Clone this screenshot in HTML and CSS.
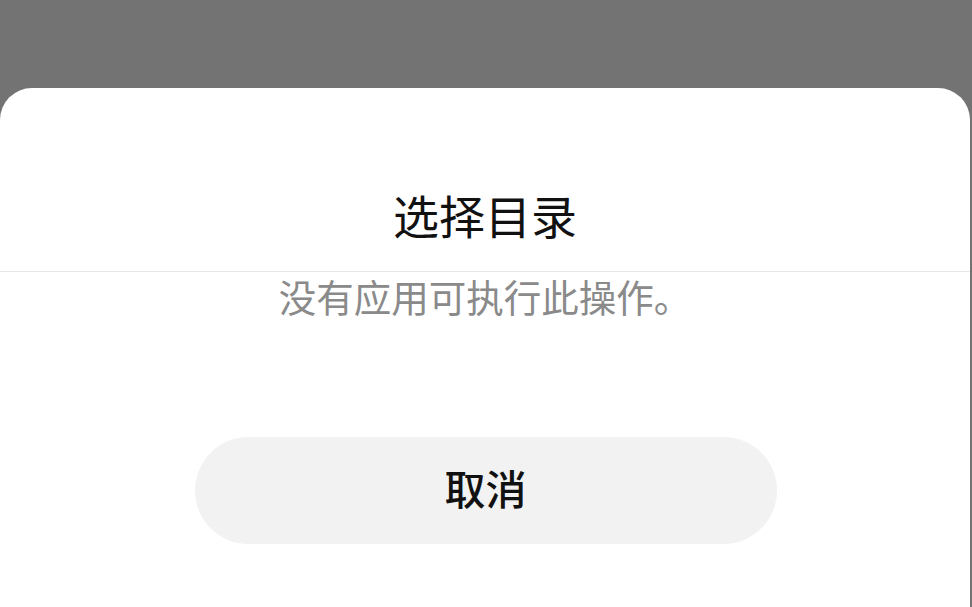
FILE: index.html
```html
<!DOCTYPE html>
<html lang="zh">
<head>
<meta charset="utf-8">
<link rel="stylesheet" href="styles.css">
</head>
<body>
<div class="sheet">
  <div class="header">
    <h1 class="title">选择目录</h1>
  </div>
  <p class="message">没有应用可执行此操作。</p>
  <div class="actions">
    <button class="cancel">取消</button>
  </div>
</div>
</body>
</html>
```

FILE: styles.css
```css
html, body {
  margin: 0;
  height: 100%;
}
body {
  background: #737373;
  font-family: "Noto Sans CJK SC", "Noto Sans", sans-serif;
  display: flex;
  flex-direction: column;
  overflow: hidden;
}
.sheet {
  margin: 88px 2px 0 0;
  flex: 1;
  background: #ffffff;
  border-radius: 32px 32px 0 0;
  display: flex;
  flex-direction: column;
}
.header {
  padding: 96px 0 27px;
  border-bottom: 1px solid #e6e6e6;
}
.title {
  margin: 0;
  font-size: 46px;
  line-height: 60px;
  font-weight: 400;
  color: #111;
  text-align: center;
}
.message {
  margin: 0;
  font-size: 37.5px;
  line-height: 48px;
  color: #8a8a8a;
  text-align: center;
}
.actions {
  display: flex;
  justify-content: center;
  margin-top: 117px;
}
.cancel {
  width: 582px;
  height: 107px;
  margin-left: 1px;
  padding: 0 0 8px;
  border: none;
  border-radius: 54px;
  background: #f2f2f2;
  font-family: "Noto Sans CJK SC", "Noto Sans", sans-serif;
  font-size: 41px;
  font-weight: 500;
  color: #111;
}
```
